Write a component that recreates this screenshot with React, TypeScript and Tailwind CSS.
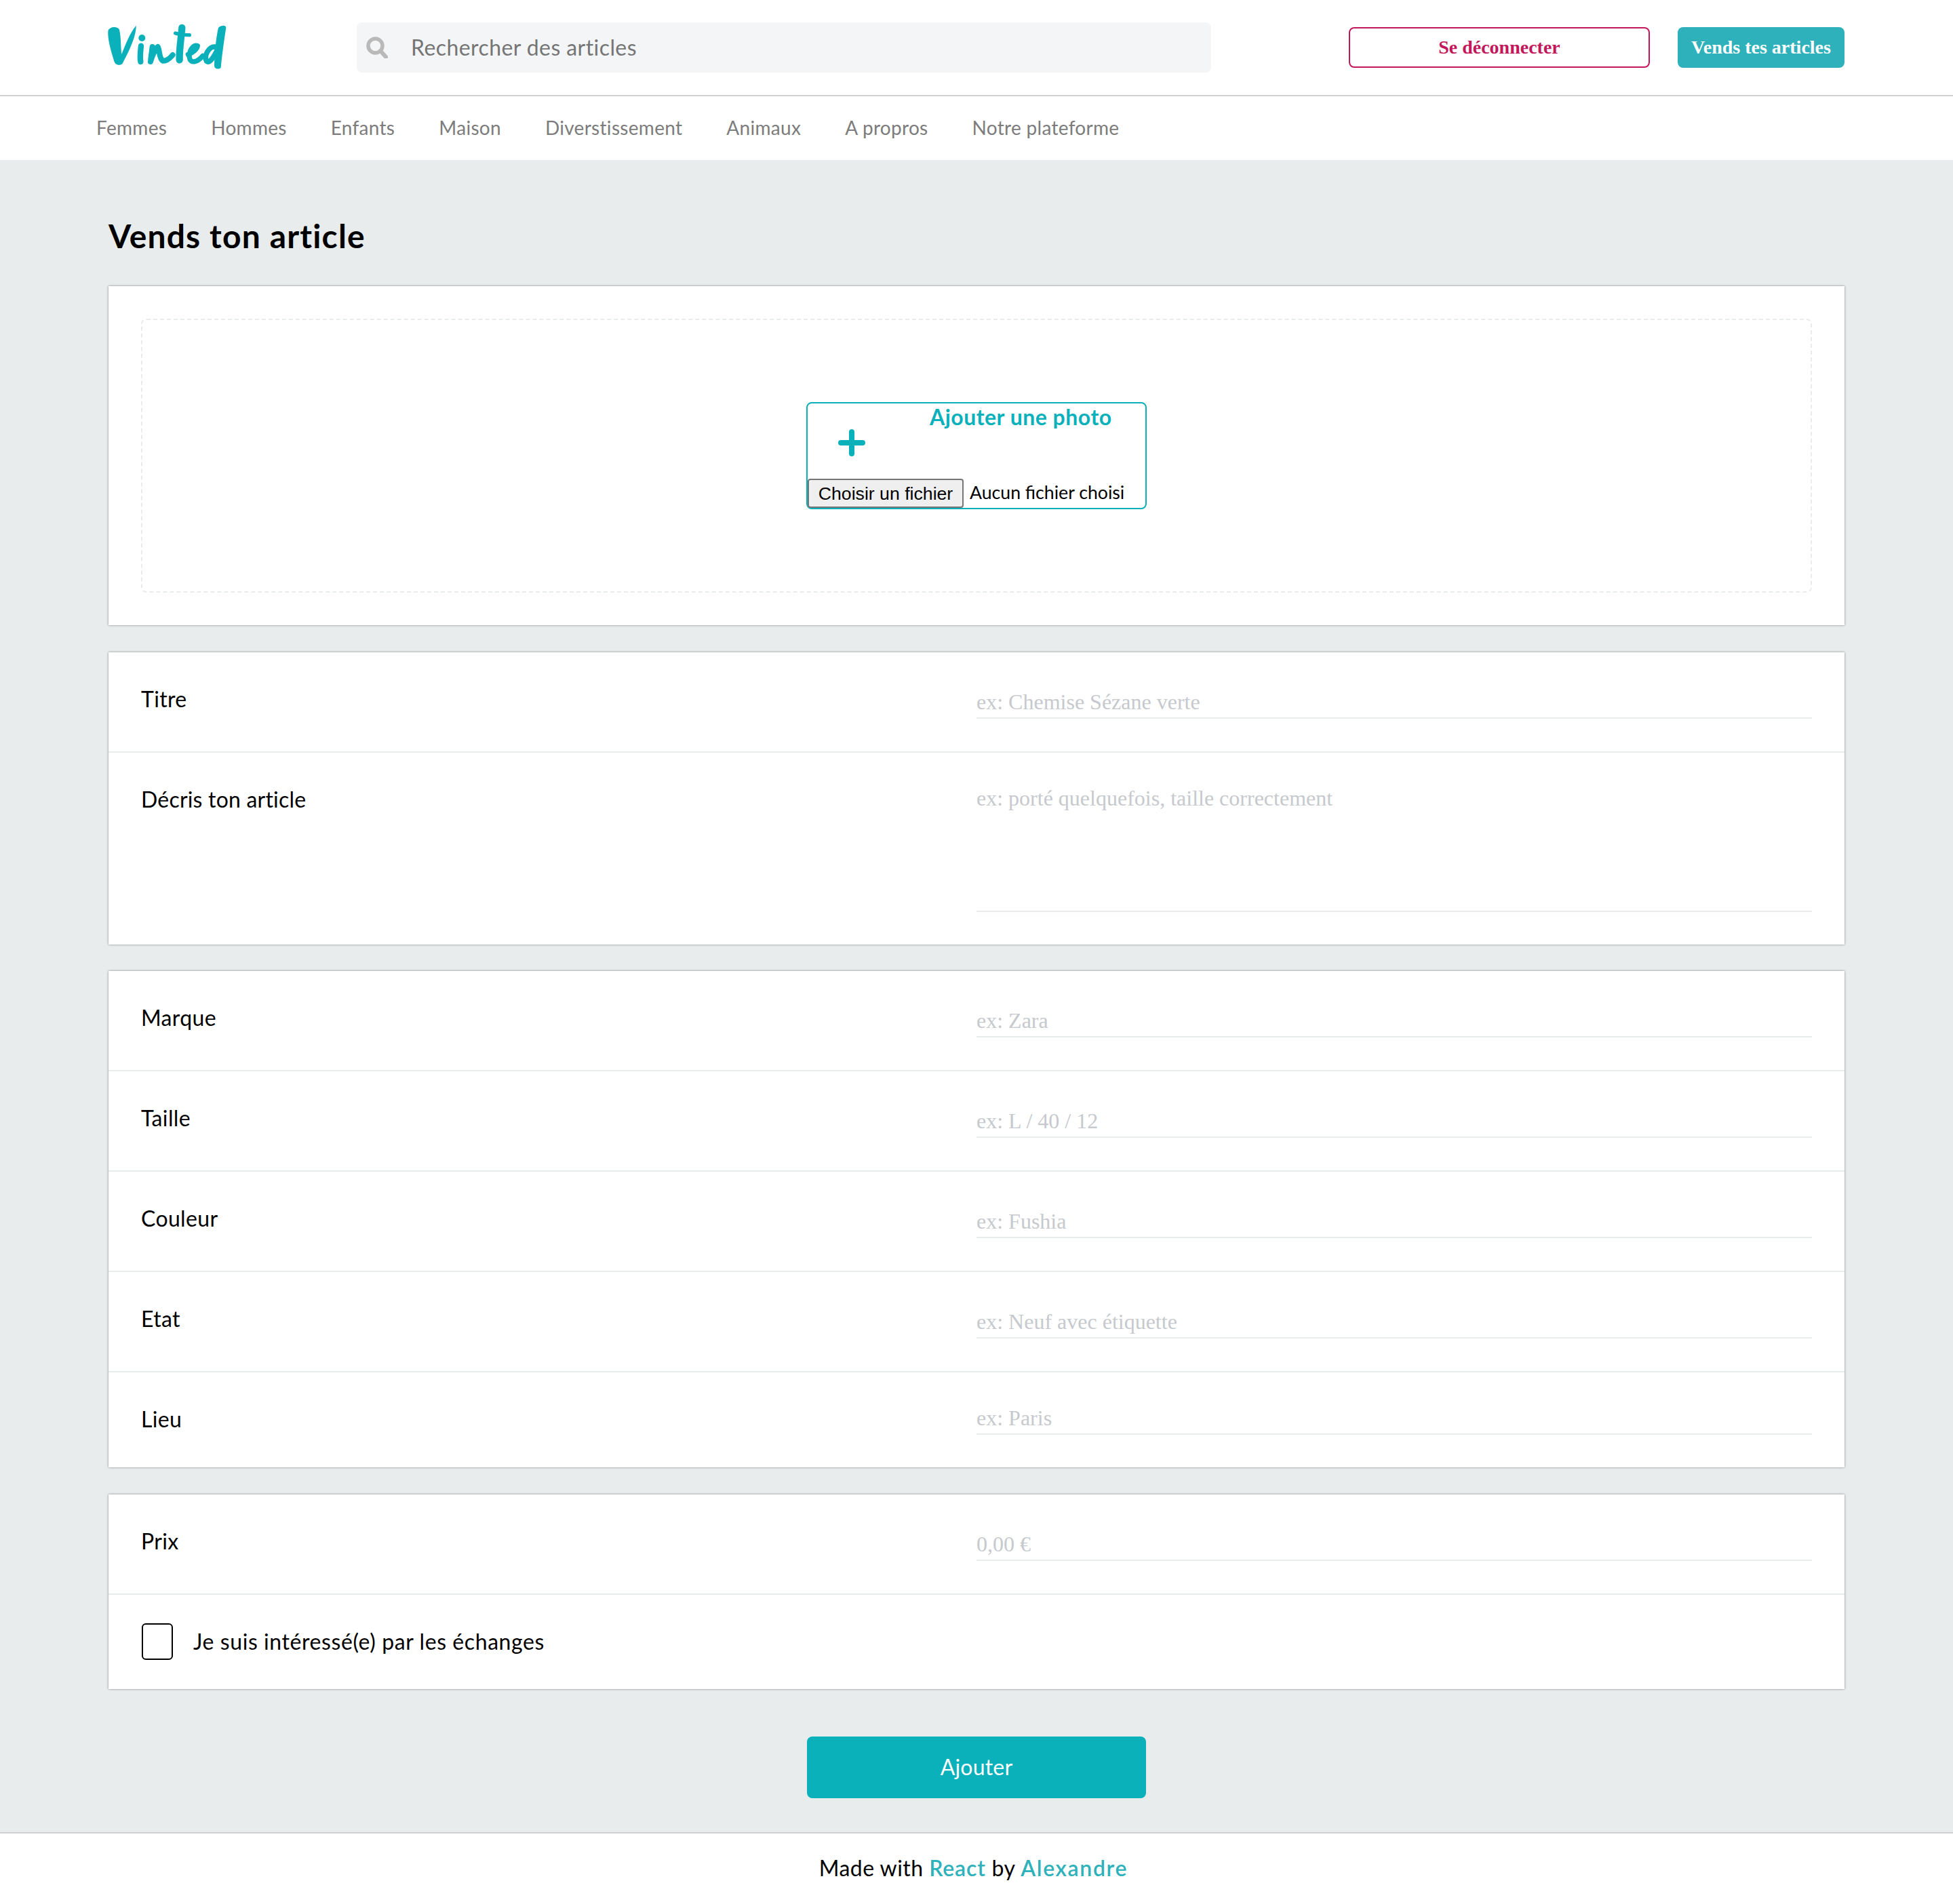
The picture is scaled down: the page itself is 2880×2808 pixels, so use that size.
import React from "react";

const navItems = ["Femmes", "Hommes", "Enfants", "Maison", "Diverstissement", "Animaux", "A propros", "Notre plateforme"];

function Logo() {
  return (
    <svg viewBox="0 0 570 255" className="w-[190px] h-[85px] -ml-[10px]" fill="none" stroke="#0ab1ba" strokeLinecap="round" strokeLinejoin="round">
      <path fill="#0ab1ba" stroke="none" d="M28 62C34 42 70 40 78 56C86 90 84 135 88 165C104 125 124 72 152 38C154 86 116 160 92 206C78 218 58 214 53 190C42 150 26 105 28 62Z" />
      <circle cx="178" cy="93" r="15" fill="#0ab1ba" stroke="none" />
      <path strokeWidth="25" d="M174 128C172 150 168 175 172 198" />
      <path strokeWidth="24" d="M224 132C222 150 218 175 216 198C224 170 236 145 248 132C258 150 252 180 270 194C284 196 300 185 314 168" />
      <path strokeWidth="31" d="M355 48C352 90 342 150 344 190" />
      <path strokeWidth="16" d="M326 72C345 78 370 80 388 80" />
      <path strokeWidth="22" d="M382 166C402 160 422 142 424 128C405 120 385 150 388 180C392 207 422 202 447 172" />
      <path strokeWidth="23" d="M502 132C475 130 450 170 464 196C477 206 497 178 514 140" />
      <path fill="#0ab1ba" stroke="none" d="M516 48C528 36 550 34 550 48C542 100 532 170 527 224C518 234 498 230 498 215C500 160 504 100 516 48Z" />
    </svg>
  );
}

function Row({ label, placeholder, last, h = "h-[148px]", inputTop = "pt-[50px]" }: { label: string; placeholder: string; last?: boolean; h?: string; inputTop?: string }) {
  return (
    <div className={`flex ${h} pl-[48px] pr-[48px] ${last ? "" : "border-b-2 border-[#e9eced]"}`}>
      <label className="w-[1232px] pt-[47px] text-[32px] leading-[44px] text-black tracking-[0.35px]">{label}</label>
      <div className={`w-[1232px] ${inputTop}`}>
        <input
          placeholder={placeholder}
          className="block w-full h-[48px] border-b-2 border-[#e9eced] font-['Liberation_Serif',serif] text-[32px] leading-[36px] bg-white outline-none placeholder:text-[#c6c9cd]"
        />
      </div>
    </div>
  );
}

const cardClass = "bg-white shadow-[0_0_3px_rgba(0,0,0,0.45)]";

export default function App() {
  return (
    <div className="w-full min-h-[2808px] bg-white font-['Lato',sans-serif] text-black">
      <header className="flex h-[142px] items-start border-b-2 border-[#d0d0d0] pl-[160px] pr-[160px] pt-[33px]">
        <div className="w-[366px] h-[74px] -mt-[8px]">
          <Logo />
        </div>
        <div className="flex h-[74px] w-[1260px] items-center rounded-[8px] bg-[#f4f5f7] pl-[14px]">
          <svg viewBox="0 0 32 32" className="h-[32px] w-[32px]" fill="none" stroke="#b9b9b9" strokeLinecap="round">
            <circle cx="13.5" cy="13.5" r="10.5" strokeWidth="5.5" />
            <path d="M21 21 L29 30" strokeWidth="6" />
          </svg>
          <input
            placeholder="Rechercher des articles"
            className="ml-[34px] mb-[2px] h-[70px] flex-1 bg-transparent text-[32px] outline-none tracking-[0.42px] placeholder:text-[#757575]"
          />
        </div>
        <div className="ml-auto mt-[7px] flex gap-[41px] font-['Liberation_Serif',serif] text-[28px] font-bold">
          <button className="h-[60px] w-[444px] rounded-[8px] border-2 border-[#c2185b] bg-white text-[#c2185b]">Se déconnecter</button>
          <button className="h-[60px] w-[246px] rounded-[8px] bg-[#2eb1bb] text-white">Vends tes articles</button>
        </div>
      </header>

      <nav className="flex h-[94px] items-center gap-[65px] pb-[2px] pl-[142px] text-[28px] text-[#7c7c7c] tracking-[0.3px]">
        {navItems.map((n) => (
          <a key={n}>{n}</a>
        ))}
      </nav>

      <main className="bg-[#e9eced] px-[160px] pt-[76px] pb-[50px]">
        <h1 className="mb-[38px] text-[48px] font-bold leading-[72px] tracking-[1.15px]">Vends ton article</h1>

        <section className={`${cardClass} h-[500px] p-[48px]`}>
          <div className="flex h-[404px] items-center justify-center rounded-[8px] border-2 border-dashed border-[#e9eced]">
            <div className="flex h-[158px] w-[502px] flex-col rounded-[8px] border-2 border-[#0ab1ba]">
              <div className="flex flex-1 items-start">
                <svg viewBox="0 0 40 40" className="ml-[45px] mt-[38px] h-[40px] w-[40px]" stroke="#0ab1ba" strokeWidth="8" strokeLinecap="round">
                  <path d="M20 4V36M4 20H36" />
                </svg>
                <span className="ml-[95px] -mt-[2px] text-[32px] font-bold leading-[44px] tracking-[0.5px] text-[#0ab1ba] whitespace-nowrap">Ajouter une photo</span>
              </div>
              <div className="flex items-center">
                <button className="h-[43px] w-[230px] rounded-[4px] border-2 border-[#767676] bg-[#efefef] font-['Liberation_Sans',sans-serif] text-[26.67px] text-black">
                  Choisir un fichier
                </button>
                <span className="ml-[9px] mb-[3px] text-[26.67px] whitespace-nowrap">Aucun fichier choisi</span>
              </div>
            </div>
          </div>
        </section>

        <section className={`${cardClass} mt-[40px]`}>
          <Row label="Titre" placeholder="ex: Chemise Sézane verte" />
          <div className="flex h-[283px] px-[48px]">
            <label className="w-[1232px] pt-[47px] text-[32px] leading-[44px] tracking-[0.2px]">Décris ton article</label>
            <div className="w-[1232px] pt-[49px]">
              <textarea
                placeholder="ex: porté quelquefois, taille correctement"
                className="block h-[186px] w-full resize-none border-b-2 border-[#e9eced] font-['Liberation_Serif',serif] text-[32px] leading-[36px] outline-none placeholder:text-[#c6c9cd]"
              />
            </div>
          </div>
        </section>

        <section className={`${cardClass} mt-[39px]`}>
          <Row label="Marque" placeholder="ex: Zara" />
          <Row label="Taille" placeholder="ex: L / 40 / 12" />
          <Row label="Couleur" placeholder="ex: Fushia" />
          <Row label="Etat" placeholder="ex: Neuf avec étiquette" />
          <Row label="Lieu" placeholder="ex: Paris" last h="h-[140px]" inputTop="pt-[44px]" />
        </section>

        <section className={`${cardClass} mt-[40px]`}>
          <Row label="Prix" placeholder="0,00 €" />
          <div className="flex h-[139px] items-center pl-[49px] pb-[1px]">
            <input type="checkbox" className="h-[54px] w-[46px] appearance-none rounded-[6px] border-2 border-black bg-white" />
            <span className="ml-[30px] text-[32px] tracking-[0.58px]">Je suis intéressé(e) par les échanges</span>
          </div>
        </section>

        <div className="mt-[70px] flex justify-center">
          <button className="h-[91px] w-[500px] rounded-[8px] bg-[#0ab1ba] pb-[2px] text-[32px] text-white tracking-[0.2px]">Ajouter</button>
        </div>
      </main>

      <footer className="flex h-[106px] items-center justify-center border-t-2 border-[#d0d0d0] pb-[3px] text-[32px] tracking-[0.45px]">
        <span className="mr-[9px]">
          Made with <a className="font-semibold tracking-[0.85px] text-[#2eb1bb]">React</a> by <a className="font-semibold tracking-[1.65px] text-[#2eb1bb]">Alexandre</a>
        </span>
      </footer>
    </div>
  );
}
